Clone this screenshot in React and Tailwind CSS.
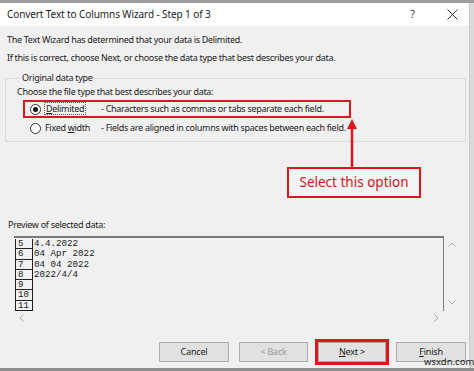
import React from 'react'

const rows = [
  { n: '5', v: '4.4.2022' },
  { n: '6', v: '04 Apr 2022' },
  { n: '7', v: '04 04 2022' },
  { n: '8', v: '2022/4/4' },
  { n: '9', v: '' },
  { n: '10', v: '' },
  { n: '11', v: '' },
]

function Radio({ checked }) {
  return (
    <span className="w-[11px] h-[11px] rounded-full border border-[#333] bg-white flex items-center justify-center shrink-0">
      {checked && <span className="w-[5px] h-[5px] rounded-full bg-[#111]" />}
    </span>
  )
}

function Btn({ children, className = '' }) {
  return (
    <div className={'h-[20px] bg-[#e1e1e1] border border-[#adadad] flex items-center justify-center text-[9px] tracking-[-0.2px] ' + className}>
      {children}
    </div>
  )
}

export default function App() {
  return (
    <div className="relative w-[474px] h-[371px] overflow-hidden bg-[#dadada] flex flex-col text-[#1b1b1b]" style={{ fontFamily: '"Noto Sans", sans-serif' }}>
      <div className="h-[3px] bg-[#9d9d9d] shrink-0" />
      <div className="flex-1 flex min-h-0">
        <div className="w-[470px] bg-[#f0f0f0] border-r border-[#c9c9c9] flex flex-col">
          {/* title bar */}
          <div className="h-[23px] bg-white flex items-center pl-[7px] text-[10px] tracking-[-0.1px] shrink-0">
            <span>Convert Text to Columns Wizard - Step 1 of 3</span>
            <span className="ml-auto text-[11px] text-[#444] mr-[32px]">?</span>
            <svg width="11" height="11" viewBox="0 0 11 11" className="mr-[11px]">
              <path d="M0.5 0.5 L10.5 10.5 M10.5 0.5 L0.5 10.5" stroke="#333" strokeWidth="1" />
            </svg>
          </div>

          <div className="flex-1 flex flex-col pl-[7px] pr-[3px] text-[9px] tracking-[-0.3px] leading-[14px]">
            <div className="mt-[7px]">The Text Wizard has determined that your data is Delimited.</div>
            <div className="mt-[4px]">If this is correct, choose Next, or choose the data type that best describes your data.</div>

            <fieldset className="mt-[6px] -ml-[2px] border border-[#dcdcdc] pl-[11px] pb-[6px]">
              <legend className="ml-[3px] px-[2px]">Original data type</legend>
              <div>Choose the file type that best describes your data:</div>
              <div className="mt-[1px] ml-[6px] w-[328px] h-[18px] border-2 border-[#e3131b] flex items-center pl-[5px]">
                <Radio checked />
                <span className="w-[57px] ml-[3px] shrink-0">
                  <span className="px-[1px] border border-dotted border-[#555] leading-[11px] inline-block"><span className="underline">D</span>elimited</span>
                </span>
                <span className="whitespace-nowrap">- Characters such as commas or tabs separate each field.</span>
              </div>
              <div className="mt-[3px] ml-[13px] h-[14px] flex items-center">
                <Radio />
                <span className="w-[56px] ml-[4px] shrink-0">Fixed <span className="underline">w</span>idth</span>
                <span className="whitespace-nowrap">- Fields are aligned in columns with spaces between each field.</span>
              </div>
            </fieldset>

            <div className="mt-[76px] ml-[1px]">Preview of selected data:</div>

            <div className="mt-[4px] ml-[7px] flex tracking-normal">
              <div className="w-[430px] h-[75px] border-t-2 border-r border-[#7a7a7a] flex overflow-hidden" style={{ fontFamily: '"Liberation Mono", monospace' }}>
                <div className="mt-[1px] ml-[1px] w-[18px] border-l border-r border-[#222] flex flex-col">
                  {rows.map((r) => (
                    <div key={r.n} className="h-[10.3px] border-b border-[#222] text-[9px] leading-[10px] pl-[2px]">{r.n}</div>
                  ))}
                </div>
                <div className="mt-[1px] flex flex-col pl-[1px]">
                  {rows.map((r) => (
                    <div key={r.n} className="h-[10.3px] text-[9.2px] leading-[10px] whitespace-pre">{r.v}</div>
                  ))}
                </div>
              </div>
              <div className="w-[16px] h-[75px] flex flex-col items-center justify-between py-[6px]">
                <svg width="8" height="5" viewBox="0 0 8 5"><path d="M0.5 4.5 L4 1 L7.5 4.5" fill="none" stroke="#a8a8a8" /></svg>
                <svg width="8" height="5" viewBox="0 0 8 5"><path d="M0.5 0.5 L4 4 L7.5 0.5" fill="none" stroke="#a8a8a8" /></svg>
              </div>
            </div>
            <div className="ml-[7px] w-[430px] h-[14px] flex items-center justify-between px-[5px]">
              <svg width="5" height="8" viewBox="0 0 5 8"><path d="M4.5 0.5 L1 4 L4.5 7.5" fill="none" stroke="#a8a8a8" /></svg>
              <svg width="5" height="8" viewBox="0 0 5 8"><path d="M0.5 0.5 L4 4 L0.5 7.5" fill="none" stroke="#a8a8a8" /></svg>
            </div>

            <div className="mt-[17px] flex justify-end gap-[10px]">
              <Btn className="w-[70px]">Cancel</Btn>
              <Btn className="w-[69px] text-[#9a9a9a]">&lt; Back</Btn>
              <Btn className="w-[68px] outline-[3px] outline outline-[#e3131b]"><span><span className="underline">N</span>ext &gt;</span></Btn>
              <Btn className="w-[70px] items-start pt-[2px]"><span><span className="underline">F</span>inish</span></Btn>
            </div>
          </div>
        </div>
      </div>
      <div className="h-[3px] bg-[#8d8d8d] shrink-0" />

      {/* annotation overlay */}
      <svg className="absolute left-[347px] top-[119px]" width="10" height="50" viewBox="0 0 10 50">
        <path d="M5 0 L0 10 L10 10 Z" fill="#e3131b" />
        <path d="M5 8 L5 50" stroke="#e3131b" strokeWidth="2.5" />
      </svg>
      <div className="absolute left-[287px] top-[167px] w-[134px] h-[31px] border-2 border-[#e3131b] bg-[#f4f4f4] flex items-center justify-center text-[13.5px] text-[#d4141c]">
        Select this option
      </div>
      <div className="absolute left-[424px] top-[356px] text-[9.5px] leading-[11px] text-[#222]">wsxdn.com</div>
    </div>
  )
}
